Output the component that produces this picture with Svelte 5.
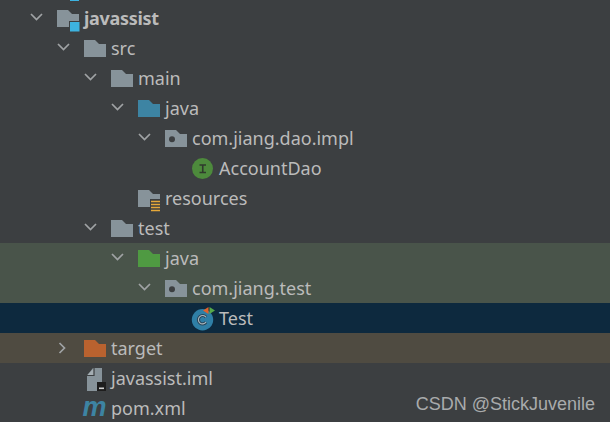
<script lang="ts">
  interface Node {
    name: string;
    depth: number;
    open?: boolean;
    icon: string;
    row?: string;
    bold?: boolean;
  }

  const nodes: Node[] = [
    { name: 'javassist', depth: 0, open: true, icon: 'module', bold: true },
    { name: 'src', depth: 1, open: true, icon: 'folder' },
    { name: 'main', depth: 2, open: true, icon: 'folder' },
    { name: 'java', depth: 3, open: true, icon: 'source' },
    { name: 'com.jiang.dao.impl', depth: 4, open: true, icon: 'package' },
    { name: 'AccountDao', depth: 5, icon: 'interface' },
    { name: 'resources', depth: 3, icon: 'resources' },
    { name: 'test', depth: 2, open: true, icon: 'folder' },
    { name: 'java', depth: 3, open: true, icon: 'testsource', row: 'test' },
    { name: 'com.jiang.test', depth: 4, open: true, icon: 'package', row: 'test' },
    { name: 'Test', depth: 5, icon: 'testclass', row: 'selected' },
    { name: 'target', depth: 1, open: false, icon: 'excluded', row: 'excluded' },
    { name: 'javassist.iml', depth: 1, icon: 'iml' },
    { name: 'pom.xml', depth: 1, icon: 'maven' },
  ];

  const folderPath = 'M0 7h11l4 4h7v13H0z';
</script>

<div class="tree">
  <div class="clip"><span class="clip-mark"></span></div>
  {#each nodes as node, i (i)}
    <div class="row {node.row ?? ''}" style="padding-left: {27 + node.depth * 27}px">
      <span class="arrow">
        {#if node.open === true}
          <svg width="18" height="18" viewBox="0 0 18 18"><path d="M4 5l5.5 5.5L15 5" /></svg>
        {:else if node.open === false}
          <svg width="18" height="18" viewBox="0 0 18 18"><path d="M5.5 4l5 5-5 5" /></svg>
        {/if}
      </span>
      <span class="icon">
        <svg width="30" height="30" viewBox="0 0 30 30">
          {#if node.icon === 'module'}
            <path d={folderPath} fill="#87939a" />
            <rect x="12" y="18" width="11" height="7" fill="#3c3f41" />
            <rect x="13" y="19" width="9.5" height="9.5" fill="#3db3e0" />
          {:else if node.icon === 'folder'}
            <path d={folderPath} fill="#87939a" />
          {:else if node.icon === 'source'}
            <path d={folderPath} fill="#3d84a3" />
          {:else if node.icon === 'testsource'}
            <path d={folderPath} fill="#4f9a42" />
          {:else if node.icon === 'excluded'}
            <path d={folderPath} fill="#b9622f" />
          {:else if node.icon === 'package'}
            <path d={folderPath} fill="#87939a" />
            <circle cx="7" cy="16.3" r="3" fill="#3c3f41" />
          {:else if node.icon === 'resources'}
            <path d={folderPath} fill="#87939a" />
            <rect x="12" y="16" width="11" height="13" fill="#3c3f41" />
            <path d="M13 18.5h9M13 21.5h9M13 24.5h9M13 27.5h9" stroke="#e5a83a" stroke-width="1.7" />
          {:else if node.icon === 'interface'}
            <circle cx="10.5" cy="15.6" r="10.5" fill="#4d8a3c" />
            <path d="M7.5 12h6.5M7.5 19.5h6.5M10.75 12v7.5" stroke="#2f3a2c" stroke-width="1.6" fill="none" />
          {:else if node.icon === 'testclass'}
            <circle cx="10.5" cy="16.7" r="10.7" fill="#2f7fa6" />
            <path d="M14 14.2a4.2 4.2 0 1 0 0 5" stroke="#28465a" stroke-width="3.2" fill="none" />
            <path d="M14 14.2a4.2 4.2 0 1 0 0 5" stroke="#aab8c0" stroke-width="1.1" fill="none" />
            <path d="M16.5 4l-5.5 3.5 5.5 3.5z" fill="#e0622c" />
            <path d="M17.5 4l5.5 3.5-5.5 3.5z" fill="#56a84a" />
          {:else if node.icon === 'iml'}
            <path d="M3 12.5l6-7.5h9v23H3z" fill="#87939a" />
            <path d="M3 12.5h7V5" stroke="#3c3f41" stroke-width="1.2" fill="#a5aeb3" />
            <rect x="13" y="19" width="9" height="9" fill="#1e1e1e" />
            <rect x="15" y="24.5" width="5" height="1.6" fill="#d0d0d0" />
          {:else if node.icon === 'maven'}
            <text x="-1.5" y="23" class="maven" textLength="24" lengthAdjust="spacingAndGlyphs">m</text>
          {/if}
        </svg>
      </span>
      <span class="name" class:bold={node.bold}>{node.name}</span>
    </div>
  {/each}
  <div class="mark">CSDN @StickJuvenile</div>
</div>

<style>
  :global(body) {
    margin: 0;
    background: #3c3f41;
  }
  .tree {
    position: relative;
    width: 610px;
    height: 422px;
    overflow: hidden;
    background: #3c3f41;
    font-family: 'Noto Sans', sans-serif;
    font-size: 18px;
    color: #bbbbbb;
  }
  .clip {
    height: 3px;
    padding-left: 70px;
  }
  .clip-mark {
    display: block;
    width: 9px;
    height: 1px;
    background: #3db3e0;
  }
  .row {
    height: 30px;
    display: flex;
    align-items: center;
    white-space: nowrap;
  }
  .row.test {
    background: #49544a;
  }
  .row.selected {
    background: #0d293e;
  }
  .row.excluded {
    background: #4f4b41;
  }
  .arrow {
    width: 18px;
    height: 18px;
    margin-right: 12px;
    flex: none;
  }
  .arrow svg {
    display: block;
  }
  .arrow path {
    fill: none;
    stroke: #a0a3a5;
    stroke-width: 1.7;
  }
  .icon {
    width: 27px;
    height: 30px;
    flex: none;
  }
  .icon svg {
    display: block;
    overflow: visible;
  }
  .maven {
    font-family: 'Liberation Sans', sans-serif;
    font-size: 28px;
    font-weight: 700;
    font-style: italic;
    fill: #3d84a3;
  }
  .name {
    line-height: 24px;
  }
  .bold {
    font-weight: 700;
    letter-spacing: -0.3px;
  }
  .mark {
    position: absolute;
    right: 15px;
    bottom: 7px;
    font-family: 'Liberation Sans', sans-serif;
    font-size: 18px;
    color: #a9abac;
  }
</style>
